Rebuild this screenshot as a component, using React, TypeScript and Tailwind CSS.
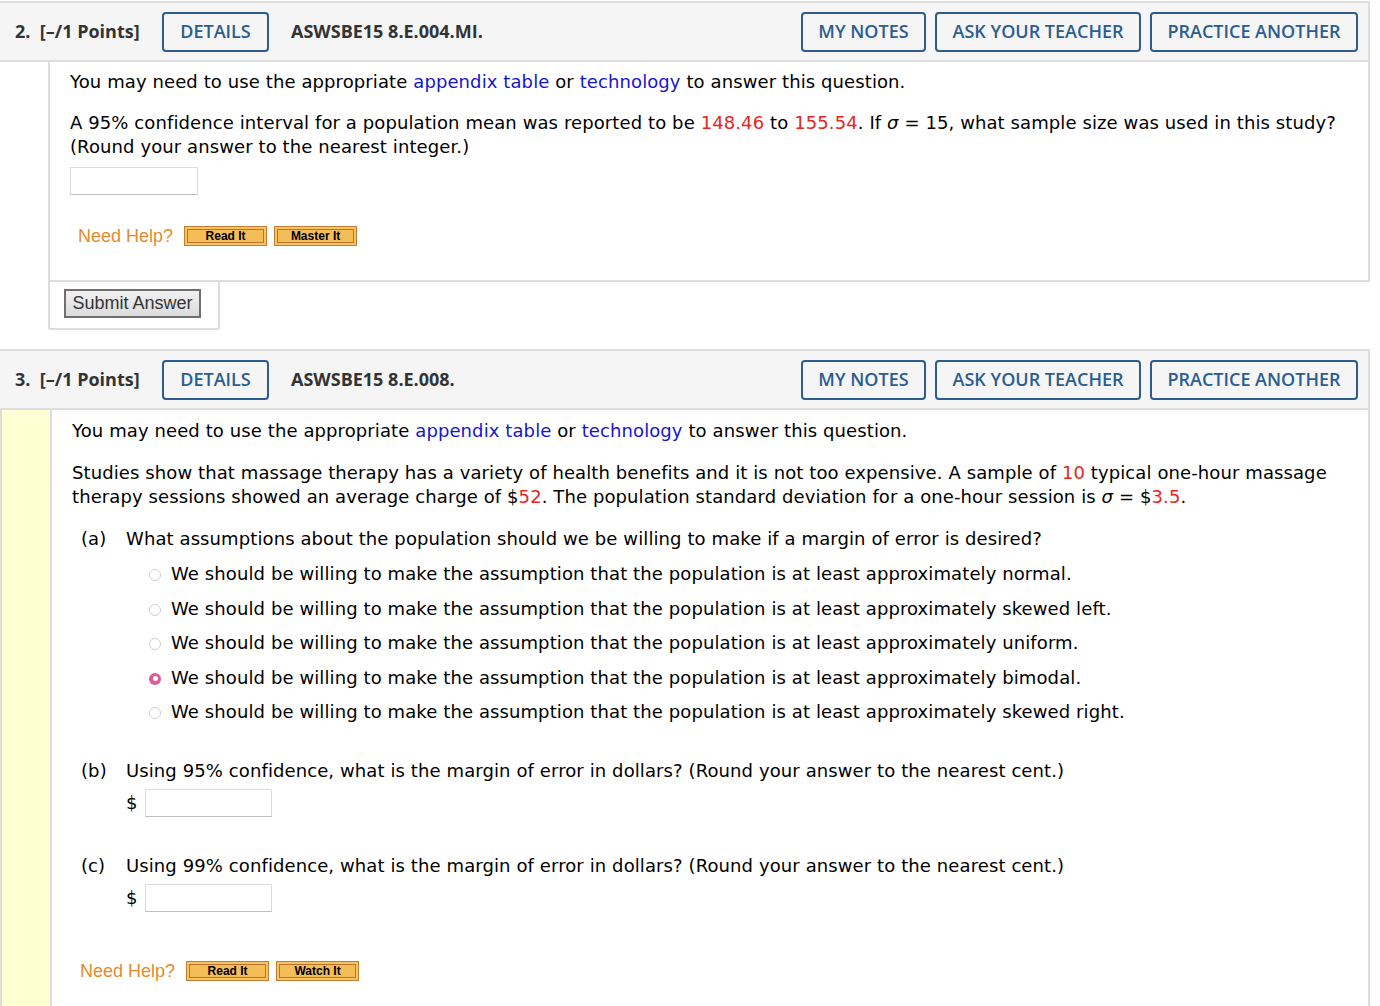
import React from 'react';

const hdrFont = { fontFamily: '"Open Sans", "Liberation Sans", sans-serif' };

function HeaderButton({ label, w }: { label: string; w: string }) {
  return (
    <button
      className={`h-[40px] ${w} rounded-[4px] border-2 border-[#2b5d90] bg-[#f5f5f5] text-[#2b5d90] text-[18px] font-semibold flex items-center justify-center`}
    >
      {label}
    </button>
  );
}

function QuestionHeader({ num, code }: { num: string; code: string }) {
  return (
    <div
      className="w-[1370px] h-[61px] bg-[#f5f5f5] border-y-2 border-r-2 border-[#dddddd] flex items-center pl-[15px] pr-[10px]"
      style={hdrFont}
    >
      <span className="text-[18px] font-bold text-[#333333] w-[147px]">
        {num}.&nbsp;&nbsp;[–/1 Points]
      </span>
      <HeaderButton label="DETAILS" w="w-[107px]" />
      <span className="ml-[22px] text-[18px] font-bold text-[#333333]">{code}</span>
      <div className="ml-auto flex gap-[9px]">
        <HeaderButton label="MY NOTES" w="w-[125px]" />
        <HeaderButton label="ASK YOUR TEACHER" w="w-[206px]" />
        <HeaderButton label="PRACTICE ANOTHER" w="w-[208px]" />
      </div>
    </div>
  );
}

function HelpBtn({ label }: { label: string }) {
  return (
    <div className="w-[83px] h-[20px] border border-[#c47d34] bg-[#f7c35f] p-[2px]">
      <div className="w-full h-full border border-[#b87432] bg-[#f4bd58] flex items-center justify-center text-[12px] font-bold text-black leading-none">
        {label}
      </div>
    </div>
  );
}

function NeedHelp({ second }: { second: string }) {
  return (
    <div className="flex items-center gap-[7px]" style={{ fontFamily: '"Liberation Sans", Arial, sans-serif' }}>
      <span className="text-[18px] text-[#e38b2c] mr-[4px]">Need Help?</span>
      <HelpBtn label="Read It" />
      <HelpBtn label={second} />
    </div>
  );
}

const Red = ({ children }: { children: React.ReactNode }) => <span className="text-[#e8251c]">{children}</span>;
const Link = ({ children }: { children: React.ReactNode }) => <span className="text-[#1515d0]">{children}</span>;

function TextInput({ w = 'w-[128px]' }: { w?: string }) {
  return <div className={`${w} h-[28px] border border-[#dcdcdc] border-b-[#bdbdbd] bg-white`} />;
}

function Radio({ checked }: { checked?: boolean }) {
  return checked ? (
    <span className="w-[12px] h-[12px] rounded-full bg-[#dc5b99] flex items-center justify-center mt-[7px] shrink-0">
      <span className="w-[5px] h-[5px] rounded-full bg-white" />
    </span>
  ) : (
    <span className="w-[12px] h-[12px] rounded-full border border-[#cfcfcf] bg-white mt-[7px] shrink-0" />
  );
}

const options = ['normal', 'skewed left', 'uniform', 'bimodal', 'skewed right'];

export default function App() {
  const body = { fontFamily: '"DejaVu Sans", Verdana, sans-serif' };
  return (
    <div className="bg-white w-[1380px] h-[1006px] overflow-hidden pt-[1px] text-black">
      {/* Question 2 */}
      <QuestionHeader num="2" code="ASWSBE15 8.E.004.MI." />
      <div className="ml-[48px] w-[1322px] border-l-2 border-r-2 border-b-2 border-[#dddddd] pl-[20px] pt-[8px] pb-[32px] text-[18px] leading-[24px] tracking-[0.1px]" style={body}>
        <p className="mb-[17px]">
          You may need to use the appropriate <Link>appendix table</Link> or <Link>technology</Link> to answer this question.
        </p>
        <p>
          A 95% confidence interval for a population mean was reported to be <Red>148.46</Red> to <Red>155.54</Red>. If <i>σ</i> = 15, what sample size was used in this study?
          <br />
          (Round your answer to the nearest integer.)
        </p>
        <div className="mt-[8px]">
          <TextInput />
        </div>
        <div className="mt-[29px] ml-[8px] tracking-normal">
          <NeedHelp second="Master It" />
        </div>
      </div>
      <div className="ml-[48px] w-[172px] h-[48px] border-l-2 border-r-2 border-b-2 border-[#dddddd] rounded-b-[3px] pl-[14px] pt-[7px]">
        <button
          className="w-[137px] h-[29px] border-2 border-[#6f6f6f] bg-gradient-to-b from-[#f0f0f0] to-[#dcdcdc] text-[18px] text-[#333333] flex items-center justify-center"
          style={{ fontFamily: '"Liberation Sans", Arial, sans-serif' }}
        >
          Submit Answer
        </button>
      </div>

      {/* Question 3 */}
      <div className="mt-[19px]">
        <QuestionHeader num="3" code="ASWSBE15 8.E.008." />
      </div>
      <div className="flex w-[1370px] h-[600px] border-r-2 border-[#dddddd]">
        <div className="w-[52px] shrink-0 bg-[#ffffd3] border-l-2 border-r-2 border-[#dddddd]" />
        <div className="pl-[20px] pt-[9px] text-[18px] leading-[24px] tracking-[0.1px] flex-1" style={body}>
          <p className="mb-[18px]">
            You may need to use the appropriate <Link>appendix table</Link> or <Link>technology</Link> to answer this question.
          </p>
          <p className="mb-[18px]">
            Studies show that massage therapy has a variety of health benefits and it is not too expensive. A sample of <Red>10</Red> typical one-hour massage
            <br />
            therapy sessions showed an average charge of $<Red>52</Red>. The population standard deviation for a one-hour session is <i>σ</i> = $<Red>3.5</Red>.
          </p>
          <div className="flex ml-[9px]">
            <span className="w-[45px]">(a)</span>
            <span>What assumptions about the population should we be willing to make if a margin of error is desired?</span>
          </div>
          <div className="ml-[77px] mt-[11px]">
            {options.map((o, i) => (
              <div key={o} className="flex items-start h-[34.5px] gap-[10px]">
                <Radio checked={i === 3} />
                <span>We should be willing to make the assumption that the population is at least approximately {o}.</span>
              </div>
            ))}
          </div>
          <div className="flex ml-[9px] mt-[24px]">
            <span className="w-[45px]">(b)</span>
            <span>Using 95% confidence, what is the margin of error in dollars? (Round your answer to the nearest cent.)</span>
          </div>
          <div className="flex items-center ml-[54px] mt-[6px] gap-[7px]">
            <span>$</span>
            <TextInput w="w-[127px]" />
          </div>
          <div className="flex ml-[9px] mt-[37px]">
            <span className="w-[45px]">(c)</span>
            <span>Using 99% confidence, what is the margin of error in dollars? (Round your answer to the nearest cent.)</span>
          </div>
          <div className="flex items-center ml-[54px] mt-[6px] gap-[7px]">
            <span>$</span>
            <TextInput w="w-[127px]" />
          </div>
          <div className="mt-[47px] ml-[8px] tracking-normal">
            <NeedHelp second="Watch It" />
          </div>
        </div>
      </div>
    </div>
  );
}
